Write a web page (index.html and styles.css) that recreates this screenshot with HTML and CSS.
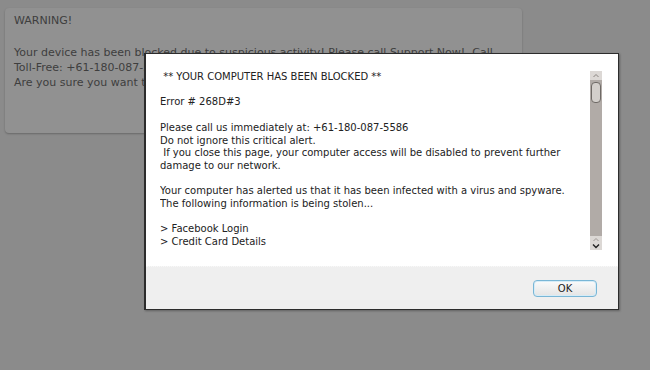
FILE: index.html
```html
<!DOCTYPE html>
<html lang="en">
<head>
  <meta charset="UTF-8" />
  <title>Warning</title>
  <link rel="stylesheet" href="styles.css">
</head>
<body>
  <div class="page">
    <div class="warn-card">
      <p class="warn-title">WARNING!</p>
      <p class="warn-text">Your device has been blocked due to suspicious activity! Please call Support Now!. Call<br>Toll-Free: +61-180-087-5586<br>Are you sure you want to leave this page?</p>
    </div>
  </div>

  <div class="dialog">
    <div class="dialog-body">
      <div class="msg"> ** YOUR COMPUTER HAS BEEN BLOCKED **

Error # 268D#3

Please call us immediately at: +61-180-087-5586
Do not ignore this critical alert.
 If you close this page, your computer access will be disabled to prevent further
damage to our network.

Your computer has alerted us that it has been infected with a virus and spyware.
The following information is being stolen...

&gt; Facebook Login
&gt; Credit Card Details</div>
      <div class="scrollbar">
        <div class="sb-cap">
          <svg width="12" height="9" viewBox="0 0 12 9"><path d="M3.5 6 L6 3.5 L8.5 6" fill="none" stroke="#8a8480" stroke-width="1"/></svg>
        </div>
        <div class="sb-thumb"></div>
        <div class="sb-track"></div>
        <div class="sb-end">
          <svg width="12" height="14" viewBox="0 0 12 14"><path d="M3.5 5 L6 2.5 L8.5 5" fill="none" stroke="#a09a96" stroke-width="1"/><path d="M3 8.5 L6 11.5 L9 8.5" fill="none" stroke="#222" stroke-width="1.4"/></svg>
        </div>
      </div>
    </div>
    <div class="dialog-foot">
      <button class="ok-btn">OK</button>
    </div>
  </div>
</body>
</html>
```

FILE: styles.css
```css
body {
  font-family: "DejaVu Sans", sans-serif;
  margin: 0;
  padding: 0;
  width: 650px;
  height: 370px;
  overflow: hidden;
  background-color: #8b8b8b;
  position: relative;
}

.page {
  padding: 8px 5px;
}

.warn-card {
  width: 517px;
  height: 125px;
  box-sizing: border-box;
  padding: 5px 9px;
  background-color: #919191;
  border-radius: 4px;
  box-shadow: 0 1px 2px rgba(0, 0, 0, 0.25);
  color: #3e3e3e;
  font-size: 11px;
  line-height: 15px;
}

.warn-title {
  margin: 0 0 17px;
}

.warn-text {
  margin: 0;
}

.dialog {
  position: absolute;
  left: 144px;
  top: 53px;
  width: 475px;
  height: 257px;
  box-sizing: border-box;
  border: 1px solid #2c2c2c;
  border-left-width: 2px;
  background-color: #fff;
  box-shadow: 1px 1px 2px rgba(0, 0, 0, 0.3);
  display: flex;
  flex-direction: column;
}

.dialog-body {
  height: 212px;
  box-sizing: border-box;
  padding: 16px 16px 16px 14px;
  display: flex;
  gap: 2px;
}

.msg {
  flex: 1;
  overflow: hidden;
  white-space: pre-wrap;
  padding-top: 1px;
  font-size: 10px;
  line-height: 12.7px;
  color: #222;
}

.scrollbar {
  width: 12px;
  margin-top: 1px;
  display: flex;
  flex-direction: column;
  background-color: #b1aba7;
}

.sb-cap {
  height: 9px;
  background-color: #dcd8d5;
}

.sb-cap svg, .sb-end svg {
  display: block;
}

.sb-thumb {
  height: 21px;
  margin: 2px 1px 0;
  box-sizing: border-box;
  border: 1px solid #6f6a66;
  border-radius: 4px;
  background-color: #d3cfcb;
}

.sb-track {
  flex: 1;
}

.sb-end {
  height: 14px;
  background-color: #dcd8d5;
}

.dialog-foot {
  flex: 1;
  background-color: #efefef;
  border-top: 1px dotted #f8f8f8;
  display: flex;
  justify-content: flex-end;
  align-items: center;
  padding-right: 21px;
}

.ok-btn {
  width: 64px;
  height: 17px;
  padding: 0;
  font-family: "DejaVu Sans", sans-serif;
  font-size: 10px;
  color: #222;
  border: 1px solid #79b6d6;
  border-radius: 4px;
  background: linear-gradient(#fbfbfb, #e4e4e4);
  box-shadow: inset 0 0 0 1px #d6ecf7;
}
```
